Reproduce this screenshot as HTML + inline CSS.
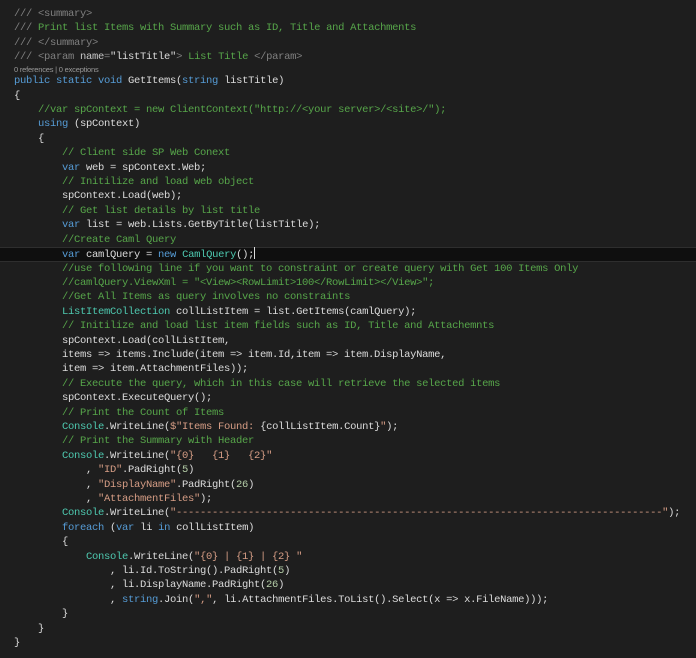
<!DOCTYPE html>
<html><head><meta charset="utf-8"><style>
html,body{margin:0;padding:0;background:#1e1e1e;width:696px;height:658px;overflow:hidden}
.c{position:absolute;left:14px;top:7px;font-family:"Liberation Mono",monospace;font-size:10.5px;letter-spacing:-0.3px;color:#dcdcdc}
.l{height:14.42px;line-height:14.42px;white-space:pre}
.lens{height:9.6px;line-height:9.6px;font-family:"Liberation Sans",sans-serif;font-size:7.5px;color:#999;letter-spacing:-0.2px;white-space:pre}
.cur{position:absolute;left:0;width:696px;top:247px;height:15px;background:#0f0f0f;border-top:1px solid #2e2e2e;border-bottom:1px solid #2e2e2e;box-sizing:border-box}
.g{color:#57a64a}.x{color:#808080}.k{color:#569cd6}.t{color:#4ec9b0}.s{color:#d69d85}.n{color:#b5cea8}
.caret{display:inline-block;width:1px;height:12px;background:#dcdcdc;vertical-align:-2px}
</style></head><body>
<div class="cur"></div>
<div class="c">
<div class="l"><span class="x">///</span><span class="g"> </span><span class="x">&lt;summary&gt;</span></div>
<div class="l"><span class="x">///</span><span class="g"> Print list Items with Summary such as ID, Title and Attachments</span></div>
<div class="l"><span class="x">///</span><span class="g"> </span><span class="x">&lt;/summary&gt;</span></div>
<div class="l"><span class="x">/// &lt;param </span><span style="color:#c8c8c8">name</span><span class="x">=</span>"listTitle"<span class="x">&gt;</span><span class="g"> List Title </span><span class="x">&lt;/param&gt;</span></div>
<div class="lens">0 references | 0 exceptions</div>
<div class="l"><span class="k">public static void</span> GetItems(<span class="k">string</span> listTitle)</div>
<div class="l">{</div>
<div class="l">    <span class="g">//var spContext = new ClientContext("http://&lt;your server&gt;/&lt;site&gt;/");</span></div>
<div class="l">    <span class="k">using</span> (spContext)</div>
<div class="l">    {</div>
<div class="l">        <span class="g">// Client side SP Web Conext</span></div>
<div class="l">        <span class="k">var</span> web = spContext.Web;</div>
<div class="l">        <span class="g">// Initilize and load web object</span></div>
<div class="l">        spContext.Load(web);</div>
<div class="l">        <span class="g">// Get list details by list title</span></div>
<div class="l">        <span class="k">var</span> list = web.Lists.GetByTitle(listTitle);</div>
<div class="l">        <span class="g">//Create Caml Query</span></div>
<div class="l">        <span class="k">var</span> camlQuery = <span class="k">new</span> <span class="t">CamlQuery</span>();<span class="caret"></span></div>
<div class="l">        <span class="g">//use following line if you want to constraint or create query with Get 100 Items Only</span></div>
<div class="l">        <span class="g">//camlQuery.ViewXml = "&lt;View&gt;&lt;RowLimit&gt;100&lt;/RowLimit&gt;&lt;/View&gt;";</span></div>
<div class="l">        <span class="g">//Get All Items as query involves no constraints</span></div>
<div class="l">        <span class="t">ListItemCollection</span> collListItem = list.GetItems(camlQuery);</div>
<div class="l">        <span class="g">// Initilize and load list item fields such as ID, Title and Attachemnts</span></div>
<div class="l">        spContext.Load(collListItem,</div>
<div class="l">        items =&gt; items.Include(item =&gt; item.Id,item =&gt; item.DisplayName,</div>
<div class="l">        item =&gt; item.AttachmentFiles));</div>
<div class="l">        <span class="g">// Execute the query, which in this case will retrieve the selected items</span></div>
<div class="l">        spContext.ExecuteQuery();</div>
<div class="l">        <span class="g">// Print the Count of Items</span></div>
<div class="l">        <span class="t">Console</span>.WriteLine(<span class="s">$"Items Found: </span>{collListItem.Count}<span class="s">"</span>);</div>
<div class="l">        <span class="g">// Print the Summary with Header</span></div>
<div class="l">        <span class="t">Console</span>.WriteLine(<span class="s">"{0}   {1}   {2}"</span></div>
<div class="l">            , <span class="s">"ID"</span>.PadRight(<span class="n">5</span>)</div>
<div class="l">            , <span class="s">"DisplayName"</span>.PadRight(<span class="n">26</span>)</div>
<div class="l">            , <span class="s">"AttachmentFiles"</span>);</div>
<div class="l">        <span class="t">Console</span>.WriteLine(<span class="s">"---------------------------------------------------------------------------------"</span>);</div>
<div class="l">        <span class="k">foreach</span> (<span class="k">var</span> li <span class="k">in</span> collListItem)</div>
<div class="l">        {</div>
<div class="l">            <span class="t">Console</span>.WriteLine(<span class="s">"{0} | {1} | {2} "</span></div>
<div class="l">                , li.Id.ToString().PadRight(<span class="n">5</span>)</div>
<div class="l">                , li.DisplayName.PadRight(<span class="n">26</span>)</div>
<div class="l">                , <span class="k">string</span>.Join(<span class="s">","</span>, li.AttachmentFiles.ToList().Select(x =&gt; x.FileName)));</div>
<div class="l">        }</div>
<div class="l">    }</div>
<div class="l">}</div>
</div>
</body></html>
